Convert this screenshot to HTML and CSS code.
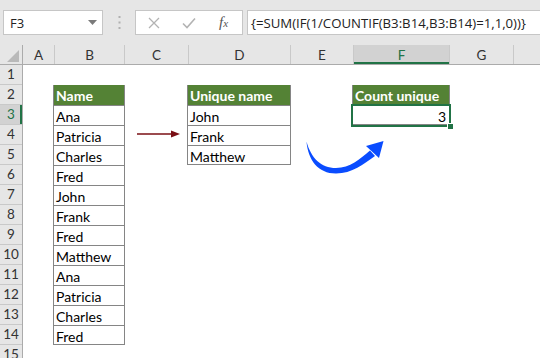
FILE: index.html
```html
<!DOCTYPE html>
<html lang="en">
<head>
    <meta charset="UTF-8">
    <title>Count unique</title>
    <link rel="stylesheet" href="styles.css">
</head>
<body>
    <div class="app">
        <div class="toolbar">
            <div class="namebox">
                <span>F3</span>
                <svg class="caret" width="9" height="5" viewBox="0 0 9 5"><path d="M0 0h9L4.5 5z" fill="#7a7a7a"/></svg>
            </div>
            <div class="grip">
                <svg width="3" height="13" viewBox="0 0 3 13"><rect x="0.5" y="0" width="2" height="2" fill="#b0b0b0"/><rect x="0.5" y="5.5" width="2" height="2" fill="#b0b0b0"/><rect x="0.5" y="11" width="2" height="2" fill="#b0b0b0"/></svg>
            </div>
            <div class="fbuttons">
                <svg width="12" height="12" viewBox="0 0 12 12"><path d="M1 1l10 10M11 1L1 11" stroke="#b3b3b3" stroke-width="1.3" fill="none"/></svg>
                <svg width="14" height="12" viewBox="0 0 14 12"><path d="M1 6.5l4 4L13 1.5" stroke="#b3b3b3" stroke-width="1.6" fill="none"/></svg>
                <span class="fx">f<small>x</small></span>
            </div>
            <div class="formula">{=SUM(IF(1/COUNTIF(B3:B14,B3:B14)=1,1,0))}</div>
        </div>

        <div class="colheads">
            <div class="corner">
                <svg width="12" height="12" viewBox="0 0 12 12"><path d="M12 0V12H0z" fill="#b9b9b9"/></svg>
            </div>
            <div class="colhead">A</div>
            <div class="colhead">B</div>
            <div class="colhead">C</div>
            <div class="colhead">D</div>
            <div class="colhead">E</div>
            <div class="colhead active">F</div>
            <div class="colhead">G</div>
            <div class="colhead"></div>
        </div>

        <div class="sheet">
            <div class="rowheads">
                <div class="rowhead">1</div>
                <div class="rowhead">2</div>
                <div class="rowhead active">3</div>
                <div class="rowhead">4</div>
                <div class="rowhead">5</div>
                <div class="rowhead">6</div>
                <div class="rowhead">7</div>
                <div class="rowhead">8</div>
                <div class="rowhead">9</div>
                <div class="rowhead">10</div>
                <div class="rowhead">11</div>
                <div class="rowhead">12</div>
                <div class="rowhead">13</div>
                <div class="rowhead">14</div>
                <div class="rowhead">15</div>
            </div>

            <div class="tbl tbl-name">
                <div class="cell head">Name</div>
                <div class="cell">Ana</div>
                <div class="cell">Patricia</div>
                <div class="cell">Charles</div>
                <div class="cell">Fred</div>
                <div class="cell">John</div>
                <div class="cell">Frank</div>
                <div class="cell">Fred</div>
                <div class="cell">Matthew</div>
                <div class="cell">Ana</div>
                <div class="cell">Patricia</div>
                <div class="cell">Charles</div>
                <div class="cell">Fred</div>
            </div>

            <div class="tbl tbl-uniq">
                <div class="cell head">Unique name</div>
                <div class="cell">John</div>
                <div class="cell">Frank</div>
                <div class="cell">Matthew</div>
            </div>

            <div class="tbl tbl-count">
                <div class="cell head">Count unique</div>
                <div class="cell num selected">3</div>
            </div>
        </div>

        <svg class="shapes" width="540" height="358" viewBox="0 0 540 358">
            <path d="M137 134H172" stroke="#7a0f14" stroke-width="1.3"/>
            <path d="M171 130.5L180 134L171 137.5z" fill="#7a0f14"/>
            <path d="M306.5 141.5C311 158 321 168 336 168C350 168 360 159 370 150.5L375 156C364 164 352 173.5 336 173.5C318 173.5 308 160 306.5 141.5z" fill="#0a4cff"/>
            <path d="M383.5 141L366 146L379 158z" fill="#0a4cff"/>
        </svg>
    </div>
</body>
</html>
```

FILE: styles.css
```css
body{
    margin: 0;
    background: #ffffff;
    overflow: hidden;
}

.app{
    position: relative;
    width: 540px;
    height: 358px;
    overflow: hidden;
    font-family: Lato, "Liberation Sans", sans-serif;
}

.toolbar{
    height: 45px;
    background: #e6e6e6;
    display: flex;
    align-items: center;
    padding-left: 3px;
    box-sizing: border-box;
    font-family: "Open Sans", "Liberation Sans", sans-serif;
    font-size: 12.5px;
    color: #222;
}

.namebox{
    width: 100px;
    height: 25px;
    box-sizing: border-box;
    background: #fff;
    border: 1px solid #c6c6c6;
    display: flex;
    align-items: center;
    justify-content: space-between;
    padding: 0 5px 0 6px;
    font-size: 13px;
}

.grip{
    width: 32px;
    display: flex;
    justify-content: center;
}

.fbuttons{
    width: 108px;
    height: 25px;
    box-sizing: border-box;
    background: #fff;
    border: 1px solid #c6c6c6;
    display: flex;
    align-items: center;
    padding-left: 12px;
    gap: 22px;
}

.fx{
    font-family: "Liberation Serif", serif;
    font-style: italic;
    font-size: 15px;
    color: #555;
    margin-left: 1px;
}

.fx small{
    font-size: 11px;
}

.formula{
    flex: 1;
    height: 25px;
    margin-left: 4px;
    margin-right: -4px;
    box-sizing: border-box;
    background: #fff;
    border: 1px solid #c6c6c6;
    padding-left: 3px;
    display: flex;
    align-items: center;
    white-space: nowrap;
    font-size: 13.2px;
}

.colheads,
.sheet{
    display: grid;
    grid-template-columns: 23px 31px 70px 64px 102px 63px 96px 64px 1fr;
}

.colheads{
    height: 19px;
    background: #e6e6e6;
    border-bottom: 1px solid #ababab;
    font-size: 13.5px;
    color: #333;
}

.corner{
    border-right: 1px solid #ababab;
    display: flex;
    align-items: flex-end;
    justify-content: flex-end;
    padding: 0 3px 2px 0;
}

.colhead{
    border-left: 1px solid #c9c9c9;
    display: flex;
    align-items: center;
    justify-content: center;
}

.colhead:nth-child(2){
    border-left: none;
}

.colhead.active{
    background: #d2d2d2;
    color: #217346;
    box-shadow: inset 0 -2px 0 #217346;
}

.sheet{
    grid-template-rows: repeat(15, 20px);
}

.rowheads{
    grid-column: 1;
    grid-row: 1 / 16;
    background: #e6e6e6;
    border-right: 1px solid #ababab;
    font-size: 13.5px;
    color: #333;
}

.rowhead{
    height: 20px;
    box-sizing: border-box;
    border-bottom: 1px solid #c9c9c9;
    display: flex;
    align-items: center;
    justify-content: center;
    padding-bottom: 1px;
}

.rowhead.active{
    background: #d2d2d2;
    color: #217346;
    box-shadow: inset -2px 0 0 #217346;
}

.tbl{
    margin-right: -1px;
    border-left: 1px solid #858585;
    border-right: 1px solid #858585;
    border-bottom: 1px solid #858585;
    margin-left: -1px;
    font-size: 14px;
    color: #000;
}

.tbl-name{
    grid-column: 3;
    grid-row: 2 / 15;
}

.tbl-uniq{
    grid-column: 5;
    grid-row: 2 / 6;
}

.tbl-count{
    grid-column: 7;
    grid-row: 2 / 4;
}

.cell{
    height: 20px;
    box-sizing: border-box;
    border-top: 1px solid #858585;
    padding: 2px 3px 0 2px;
    white-space: nowrap;
}

.cell.head{
    background: #548235;
    border-top: none;
    color: #fff;
    font-weight: bold;
    padding-top: 2px;
}

.cell.num{
    text-align: right;
}

.selected{
    position: relative;
}

.selected::after{
    content: "";
    position: absolute;
    left: -2px;
    top: -2px;
    right: -2px;
    bottom: -2px;
    border: 2px solid #217346;
}

.selected::before{
    content: "";
    position: absolute;
    right: -5px;
    bottom: -5px;
    width: 5px;
    height: 5px;
    background: #217346;
    border: 1px solid #fff;
    z-index: 1;
}

.shapes{
    position: absolute;
    left: 0;
    top: 0;
}
```
